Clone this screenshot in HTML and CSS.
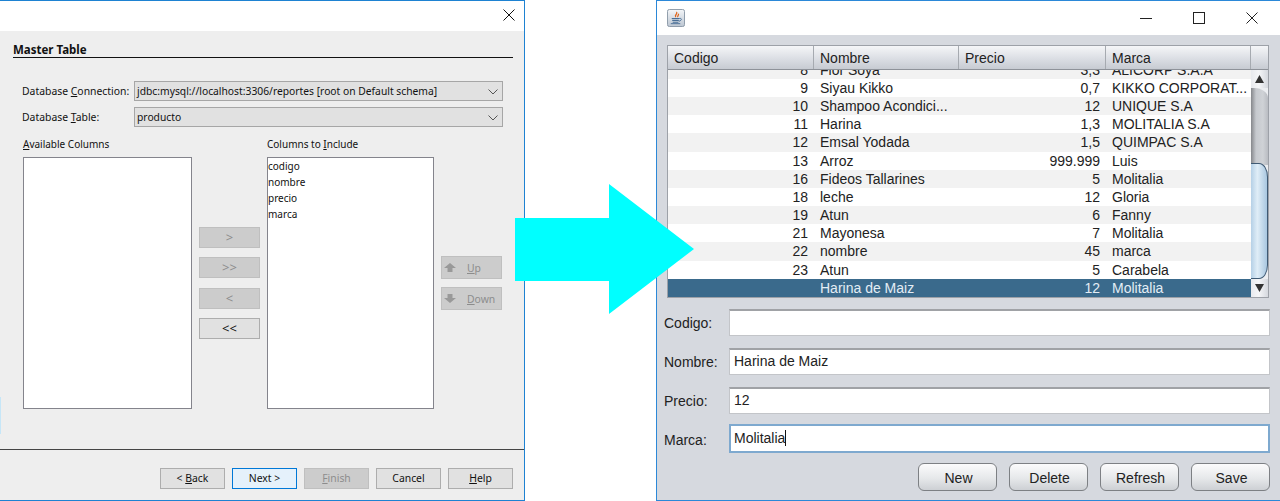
FILE: index.html
```html
<!DOCTYPE html>
<html lang="en">
<head>
<meta charset="utf-8">
<title>Master Table</title>
<link rel="stylesheet" href="styles.css">
</head>
<body>
<div class="wizard">
  <div class="wiz-title"><svg class="wiz-x" width="12" height="12" viewBox="0 0 12 12"><path d="M.5.5l11 11M11.500.5l-11 11" stroke="#111" fill="none"/></svg></div>
  <div class="wiz-body">
    <h2 class="wiz-head">Master Table</h2>
    <div class="db-row db-row-first"><span class="db-label">Database <u>C</u>onnection:</span><div class="combo">jdbc:mysql://localhost:3306/reportes [root on Default schema]<svg class="chev" width="10" height="6" viewBox="0 0 10 6"><path d="M.5.5L5 5 9.500.5" stroke="#555" fill="none"/></svg></div></div>
    <div class="db-row"><span class="db-label">Database <u>T</u>able:</span><div class="combo">producto<svg class="chev" width="10" height="6" viewBox="0 0 10 6"><path d="M.5.5L5 5 9.500.5" stroke="#555" fill="none"/></svg></div></div>
    <div class="shuttle">
      <div class="col-avail">
        <div class="col-label"><u>A</u>vailable Columns</div>
        <div class="list"></div>
      </div>
      <div class="moves">
        <div class="wbtn off">&gt;</div>
        <div class="wbtn off">&gt;&gt;</div>
        <div class="wbtn off">&lt;</div>
        <div class="wbtn">&lt;&lt;</div>
      </div>
      <div class="col-incl">
        <div class="col-label">Columns to <u>I</u>nclude</div>
        <div class="list"><div>codigo</div><div>nombre</div><div>precio</div><div>marca</div></div>
      </div>
      <div class="order">
        <div class="wbtn off tall"><svg width="14" height="11" viewBox="0 0 14 11"><path d="M7 1l6 5H9.500v4h-5V6H1z" fill="#999"/></svg><span><u>U</u>p</span></div>
        <div class="wbtn off tall"><svg width="14" height="11" viewBox="0 0 14 11"><path d="M7 10l6-5H9.500V1h-5v4H1z" fill="#999"/></svg><span><u>D</u>own</span></div>
      </div>
    </div>
  </div>
  <div class="wiz-foot">
    <div class="fbtn">&lt; <u>B</u>ack</div>
    <div class="fbtn primary">Next &gt;</div>
    <div class="fbtn disabled"><u>F</u>inish</div>
    <div class="fbtn">Cancel</div>
    <div class="fbtn"><u>H</u>elp</div>
  </div>
  <div class="edge-glow"></div>
</div>

<svg class="arrow" width="179" height="130" viewBox="0 0 179 130"><path d="M0 34H94V0L179 65 94 130V97H0z" fill="#00ffff"/></svg>

<div class="app">
  <div class="app-title">
    <svg class="java" width="18" height="18" viewBox="0 0 19 19">
      <defs><linearGradient id="jg" x1="0" y1="0" x2="0" y2="1"><stop offset="0" stop-color="#f4f6f8"/><stop offset="1" stop-color="#bcc6d2"/></linearGradient></defs>
      <rect x=".5" y=".5" width="18" height="18" rx="2" fill="url(#jg)" stroke="#8a97a6"/>
      <path d="M10 3c2 2-2.500 3-.8 5.500M12 5c1 1.500-1.500 2-.5 3.500" stroke="#e0651b" stroke-width="1.300" fill="none"/>
      <path d="M5 10h8M5.500 12h7M6 14h6" stroke="#4a6f96" stroke-width="1.100"/>
      <path d="M13 10c3-.5 3 2-.5 3" stroke="#4a6f96" fill="none"/>
      <path d="M4 15.500h10" stroke="#4a6f96"/>
    </svg>
    <div class="caption">
      <svg width="14" height="14" viewBox="0 0 14 14"><path d="M1 7.500h12" stroke="#222" fill="none"/></svg>
      <svg width="14" height="14" viewBox="0 0 14 14"><rect x="1.500" y="1.500" width="11" height="11" fill="none" stroke="#222"/></svg>
      <svg width="14" height="14" viewBox="0 0 14 14"><path d="M1.500 1.500l11 11M12.500 1.500l-11 11" stroke="#222" fill="none"/></svg>
    </div>
  </div>
  <div class="app-body">
    <div class="table">
      <div class="thead">
        <div class="th">Codigo</div><div class="th">Nombre</div><div class="th">Precio</div><div class="th">Marca</div><div class="th corner"></div>
      </div>
      <div class="tmain">
        <div class="rows">
          <div class="tr alt"><span class="num">8</span><span>Flor Soya</span><span class="num">3,3</span><span>ALICORP S.A.A</span></div>
          <div class="tr"><span class="num">9</span><span>Siyau Kikko</span><span class="num">0,7</span><span>KIKKO CORPORAT...</span></div>
          <div class="tr alt"><span class="num">10</span><span>Shampoo Acondici...</span><span class="num">12</span><span>UNIQUE S.A</span></div>
          <div class="tr"><span class="num">11</span><span>Harina</span><span class="num">1,3</span><span>MOLITALIA S.A</span></div>
          <div class="tr alt"><span class="num">12</span><span>Emsal Yodada</span><span class="num">1,5</span><span>QUIMPAC S.A</span></div>
          <div class="tr"><span class="num">13</span><span>Arroz</span><span class="num">999.999</span><span>Luis</span></div>
          <div class="tr alt"><span class="num">16</span><span>Fideos Tallarines</span><span class="num">5</span><span>Molitalia</span></div>
          <div class="tr"><span class="num">18</span><span>leche</span><span class="num">12</span><span>Gloria</span></div>
          <div class="tr alt"><span class="num">19</span><span>Atun</span><span class="num">6</span><span>Fanny</span></div>
          <div class="tr"><span class="num">21</span><span>Mayonesa</span><span class="num">7</span><span>Molitalia</span></div>
          <div class="tr alt"><span class="num">22</span><span>nombre</span><span class="num">45</span><span>marca</span></div>
          <div class="tr"><span class="num">23</span><span>Atun</span><span class="num">5</span><span>Carabela</span></div>
          <div class="tr sel"><span class="num"></span><span>Harina de Maiz</span><span class="num">12</span><span>Molitalia</span></div>
        </div>
        <div class="scrollbar">
          <div class="sb-btn"><svg width="9" height="8" viewBox="0 0 9 8"><path d="M4.500 0L9 8H0z" fill="#333"/></svg></div>
          <div class="sb-track"></div>
          <div class="sb-thumb"></div>
          <div class="sb-btn"><svg width="9" height="8" viewBox="0 0 9 8"><path d="M4.500 8L9 0H0z" fill="#333"/></svg></div>
        </div>
      </div>
    </div>
    <div class="form">
      <div class="frow"><label>Codigo:</label><div class="field"></div></div>
      <div class="frow"><label>Nombre:</label><div class="field">Harina de Maiz</div></div>
      <div class="frow"><label>Precio:</label><div class="field">12</div></div>
      <div class="frow"><label>Marca:</label><div class="field focus">Molitalia<i class="caret"></i></div></div>
    </div>
    <div class="actions">
      <div class="abtn">New</div><div class="abtn">Delete</div><div class="abtn">Refresh</div><div class="abtn">Save</div>
    </div>
  </div>
</div>
</body>
</html>
```
FILE: styles.css
```css
* { box-sizing: border-box; }
html, body { margin: 0; height: 501px; overflow: hidden; background: #fff; }
body { display: flex; justify-content: space-between; position: relative; font-family: "Noto Sans", sans-serif; }
u { text-underline-offset: 1px; }

/* Left wizard */
.wizard { position: relative; width: 525px; height: 501px; display: flex; flex-direction: column; background: #eee; border: 1px solid #1e82d2; border-left: 0; font-size: 10.400px; color: #111; }
.edge-glow { position: absolute; left: 0; top: 396px; width: 1px; height: 37px; background: #c6e6f7; }
.wiz-title { height: 30px; flex: none; background: #fff; display: flex; justify-content: flex-end; align-items: center; padding: 0 9px 2px 0; }
.wiz-body { flex: 1; margin-left: 1px; padding: 0 11px 0 12px; min-height: 0; }
.wiz-head { margin: 0; height: 27px; padding-top: 12px; font-size: 11.500px; line-height: 14px; font-weight: 700; border-bottom: 1px solid #111; }
.db-row { display: flex; align-items: center; height: 20px; margin-top: 6px; margin-right: 10px; }
.db-row-first { margin-top: 23px; }
.db-label { width: 121px; padding-left: 9px; flex: none; white-space: nowrap; }
.combo { flex: 1; height: 20px; border: 1px solid #a6a6a6; background: #e1e1e1; padding-left: 2px; display: flex; align-items: center; justify-content: space-between; white-space: nowrap; font-size: 10.300px; }
.chev { margin-right: 4px; margin-top: 2px; }
.shuttle { display: flex; margin-top: 10px; padding-left: 10px; height: 277px; }
.col-avail { width: 169px; flex: none; }
.col-incl { width: 167px; flex: none; }
.col-label { height: 20px; line-height: 14px; font-size: 10px; white-space: nowrap; }
.list { height: 252px; border: 1px solid #84848c; background: #fff; padding: 0; line-height: 16px; font-size: 10px; }
.moves { width: 61px; margin: 0 7px; flex: none; padding-top: 90px; display: flex; flex-direction: column; gap: 9.330px; }
.moves .wbtn { font-size: 13px; padding-bottom: 1px; }
.wbtn { height: 21px; border: 1px solid #adadad; background: #e1e1e1; display: flex; align-items: center; justify-content: center; }
.wbtn.off { background: #ccc; border-color: #bfbfbf; color: #8c8c8c; }
.order { width: 61px; margin-left: 7px; flex: none; padding-top: 119px; display: flex; flex-direction: column; gap: 8px; }
.tall { height: 23px; gap: 10px; justify-content: flex-start; padding-left: 1px; }
.wiz-foot { height: 51px; flex: none; border-top: 1px solid #444; display: flex; justify-content: flex-end; gap: 7px; padding: 18px 11px 0 0; }
.fbtn { width: 65px; height: 21px; padding-bottom: 2px; border: 1px solid #adadad; background: #e1e1e1; display: flex; align-items: center; justify-content: center; white-space: pre; }
.fbtn.primary { border-color: #0078d7; background: #e5f1fb; }
.fbtn.disabled { background: #ccc; border-color: #bfbfbf; color: #8c8c8c; }

/* Arrow overlay */
.arrow { position: absolute; left: 515px; top: 184px; z-index: 2; }

/* Right application window */
.app { width: 624px; height: 501px; display: flex; flex-direction: column; background: #d6d9df; border: 1px solid #2b88d8; border-right: 0; font-family: "Liberation Sans", sans-serif; font-size: 14px; color: #222; }
.app-title { height: 34px; flex: none; background: #fff; display: flex; align-items: center; justify-content: space-between; padding: 0 21px 1px 10px; }
.java { display: block; }
.caption { display: flex; gap: 39px; }
.caption svg { display: block; }
.app-body { flex: 1; padding: 10px 10px 0 10px; min-height: 0; display: flex; flex-direction: column; }
.table { width: 602px; height: 253px; flex: none; border: 1px solid #9da1a8; background: #fff; display: flex; flex-direction: column; }
.thead { height: 24px; flex: none; display: grid; grid-template-columns: 146px 145px 147px 145px 1fr; background: linear-gradient(#f5f6f8, #d9dce2 60%, #c7cbd2); border-bottom: 1px solid #8e9299; }
.th { padding: 4px 0 0 6px; line-height: 17px; border-right: 1px solid #a6aab0; white-space: nowrap; }
.corner { border-right: 0; }
.tmain { flex: 1; min-height: 0; display: flex; }
.rows { flex: 1; min-width: 0; display: flex; flex-direction: column; justify-content: flex-end; overflow: hidden; }
.tr { height: 18.200px; flex: none; display: grid; grid-template-columns: 146px 145px 147px 145px; line-height: 18px; background: #fff; }
.tr.alt { background: #f2f2f2; }
.tr.sel { background: #3a6a8c; color: #e3edf5; }
.tr span { padding: 0 6px; white-space: nowrap; overflow: hidden; }
.tr .num { text-align: right; }
.scrollbar { width: 17px; flex: none; display: flex; flex-direction: column; background: #eceef1; }
.sb-btn { height: 18px; flex: none; display: flex; align-items: center; justify-content: center; background: linear-gradient(90deg, #e8eaee, #f5f6f8 45%, #d5d8de); }
.sb-track { flex: 1; background: linear-gradient(90deg, #85878b, #c6c9ce 30%, #cfd2d6 70%, #b9bcc2); border-radius: 0 14px 0 0 / 0 10px 0 0; }
.sb-thumb { height: 116px; flex: none; margin-top: -2px; background: linear-gradient(90deg, #b5d0e6, #dfedf7 40%, #a9c7e0); border: 1px solid #3f5a74; border-left: 0; border-radius: 0 9px 9px 0 / 0 14px 14px 0; }
.form { display: flex; flex-direction: column; gap: 12px; margin-top: 11px; margin-left: -3px; }
.frow { display: flex; align-items: center; height: 27px; }
.frow label { width: 65px; flex: none; }
.field { flex: 1; height: 27px; background: #fff; border: 1px solid #c3c5c9; border-top: 2px solid #a0a2a6; padding-left: 4px; line-height: 23px; }
.field.focus { height: 29px; margin-top: -2px; border: 2px solid #7ea9cf; padding-left: 3px; line-height: 25px; }
.caret { display: inline-block; width: 1px; height: 16px; background: #111; vertical-align: -3px; }
.actions { display: flex; justify-content: flex-end; gap: 12px; margin-top: 10px; }
.abtn { width: 79px; height: 28px; padding: 1px 0 0 2px; border: 1px solid #7d8084; border-radius: 6px; background: linear-gradient(#fbfbfc, #e6e8ea 55%, #cdd0d4); display: flex; align-items: center; justify-content: center; }
```
